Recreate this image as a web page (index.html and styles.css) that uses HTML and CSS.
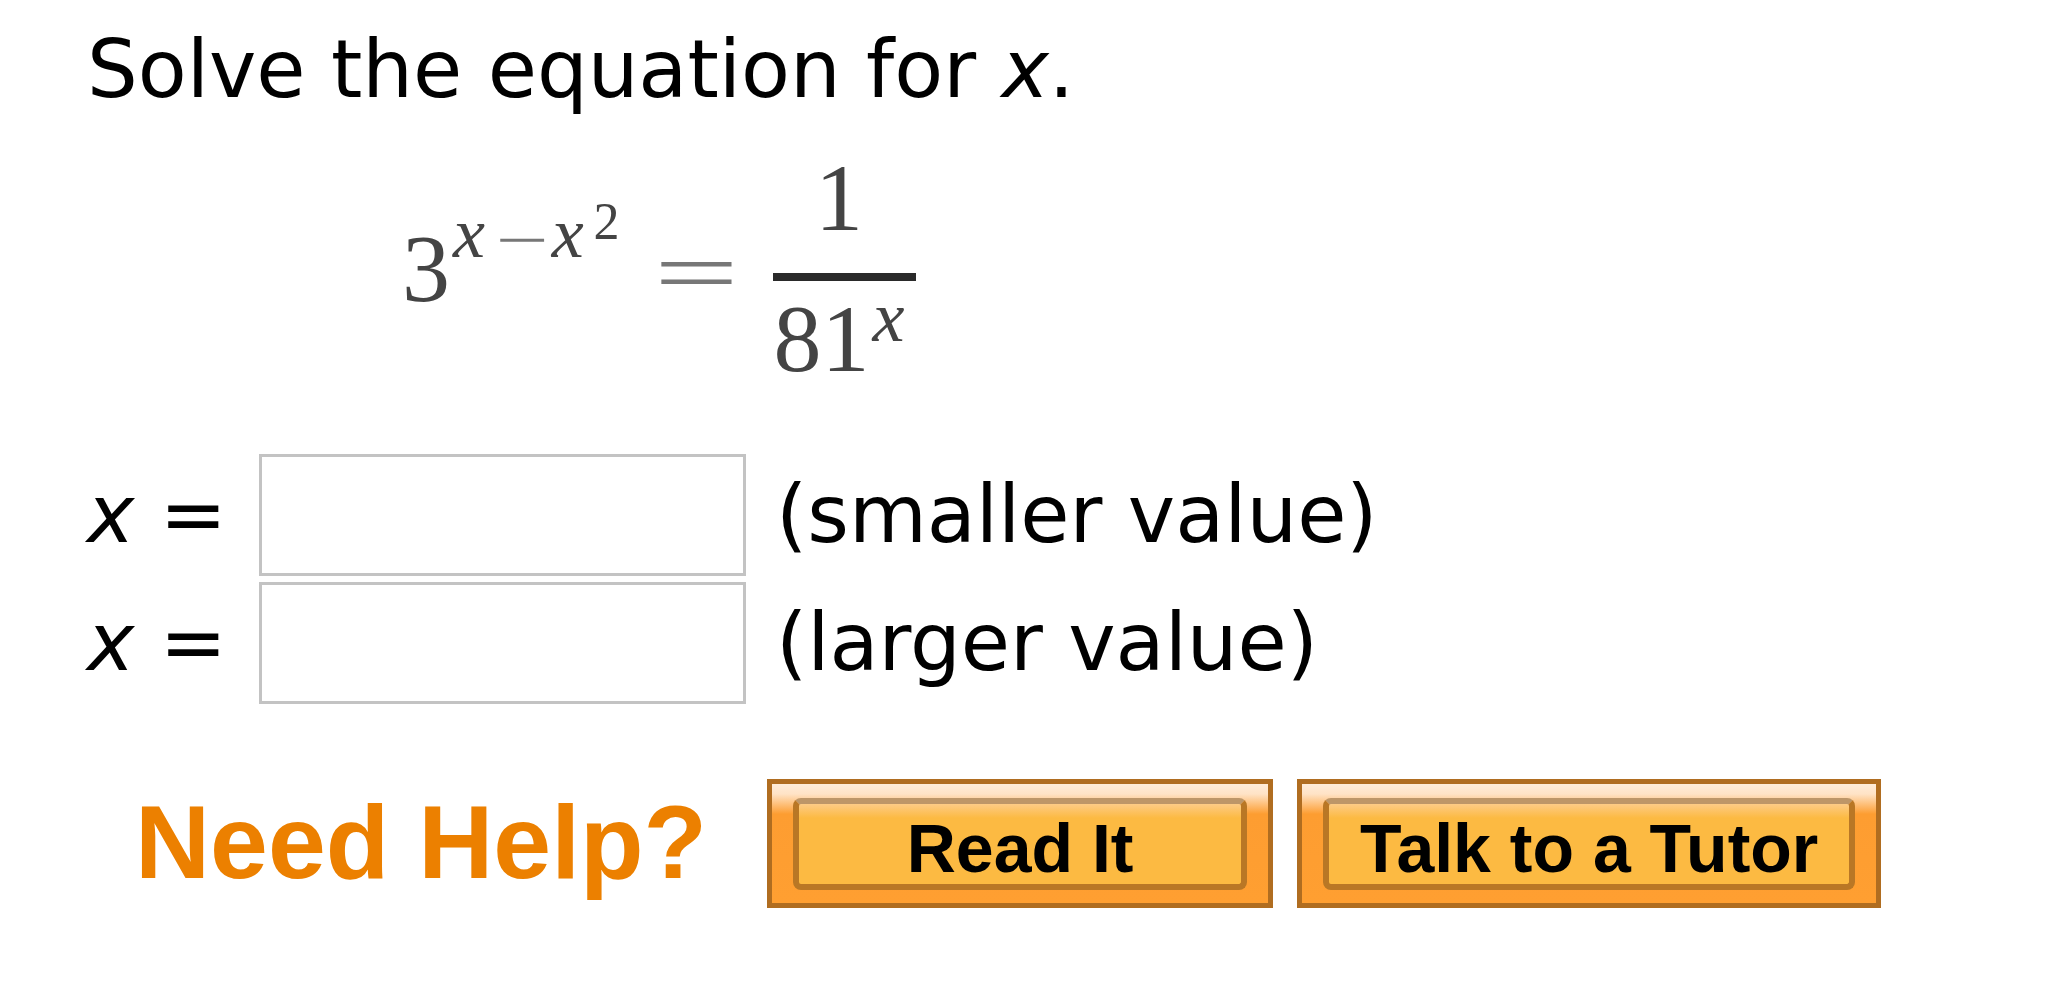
FILE: index.html
```html
<!DOCTYPE html>
<html lang="en">
<head>
  <meta charset="UTF-8">
  <meta name="viewport" content="width=device-width, initial-scale=1.0">
  <title>Solve the equation</title>
  <link rel="stylesheet" href="styles.css">
</head>
<body>

  <main class="question">
    <p class="prompt">Solve the equation for <i>x</i>.</p>

    <div class="equation">
      <div class="term">3<sup class="exp"><i>x</i><span class="minus">−</span><i>x</i><sup class="exp-two">2</sup></sup></div>
      <span class="equals">=</span>
      <div class="fraction">
        <div class="numerator">1</div>
        <div class="denominator">81<sup class="exp"><i>x</i></sup></div>
      </div>
    </div>

    <form class="answers">
      <div class="answer">
        <label for="smaller"><i>x</i> =</label>
        <input type="text" id="smaller" aria-describedby="smaller-note">
        <span id="smaller-note">(smaller value)</span>
      </div>
      <div class="answer">
        <label for="larger"><i>x</i> =</label>
        <input type="text" id="larger" aria-describedby="larger-note">
        <span id="larger-note">(larger value)</span>
      </div>
    </form>

    <div class="help">
      <span class="help-title">Need Help?</span>
      <button type="button" class="help-button read"><span>Read It</span></button>
      <button type="button" class="help-button tutor"><span>Talk to a Tutor</span></button>
    </div>
  </main>

</body>
</html>
```

FILE: styles.css
```css
* {
  box-sizing: border-box;
}
body {
  margin: 0;
  background: #fff;
  color: #000;
  font-family: Verdana, "DejaVu Sans", sans-serif;
  font-size: 80px;
  line-height: 96px;
}
.question {
  padding: 22px 24px 24px 87px;
}
.prompt {
  margin: 0;
}

/* Equation */
.equation {
  display: flex;
  align-items: center;
  gap: 30px;
  margin: 32px 0 67px;
  padding-left: 315px;
  font-family: "Liberation Serif", serif;
  font-size: 96px;
  color: #444;
}
.term {
  white-space: nowrap;
}
.exp {
  margin-left: 3px;
  font-size: 72px;
  line-height: 0;
  vertical-align: 44px;
}
.denominator .exp {
  vertical-align: 30px;
}
.exp-two {
  margin-left: 10px;
  font-size: 52px;
  line-height: 0;
  vertical-align: 18px;
}
.minus,
.equals {
  font-family: "DejaVu Sans", sans-serif;
  font-weight: 200;
  color: #777;
}
.minus {
  margin-left: 8px;
  font-size: 70px;
  vertical-align: -5px;
}
.equals {
  font-size: 112px;
}
.numerator,
.denominator {
  padding-right: 12px;
}
.numerator {
  padding-bottom: 27px;
  text-align: center;
}
.denominator {
  padding-top: 10px;
  border-top: 8px solid #2a2a2a;
}

/* Answers */
.answers {
  display: flex;
  flex-direction: column;
  gap: 6px;
}
.answer {
  display: flex;
  align-items: center;
}
.answer label {
  width: 172px;
}
.answer input {
  width: 487px;
  height: 122px;
  margin: 0 30px 0 0;
  padding: 0 16px;
  border: 3px solid #c3c3c3;
  background: #fff;
  font: inherit;
}

/* Help bar */
.help {
  display: flex;
  align-items: center;
  gap: 24px;
  margin-top: 75px;
  padding-left: 48px;
  font-family: "Liberation Sans", Arial, sans-serif;
  font-weight: bold;
}
.help-title {
  margin-right: 36px;
  padding-bottom: 4px;
  font-size: 104px;
  color: #ec8000;
}
.help-button {
  height: 129px;
  padding: 14px 21px;
  border: 5px solid #b06d20;
  background: linear-gradient(#ffecd8 0, #ffe3c6 10px, #fd9d31 30px, #ff9f31 100%);
  font: inherit;
  font-size: 68px;
  cursor: pointer;
}
.help-button span {
  display: block;
  height: 92px;
  padding-top: 4px;
  border: 6px solid #b97725;
  border-top-color: #bd9668;
  border-radius: 8px;
  background: linear-gradient(#fdcb86 0, #fcba42 14px, #fcba42 100%);
  line-height: 80px;
}
.read {
  width: 506px;
}
.tutor {
  width: 584px;
}
```
